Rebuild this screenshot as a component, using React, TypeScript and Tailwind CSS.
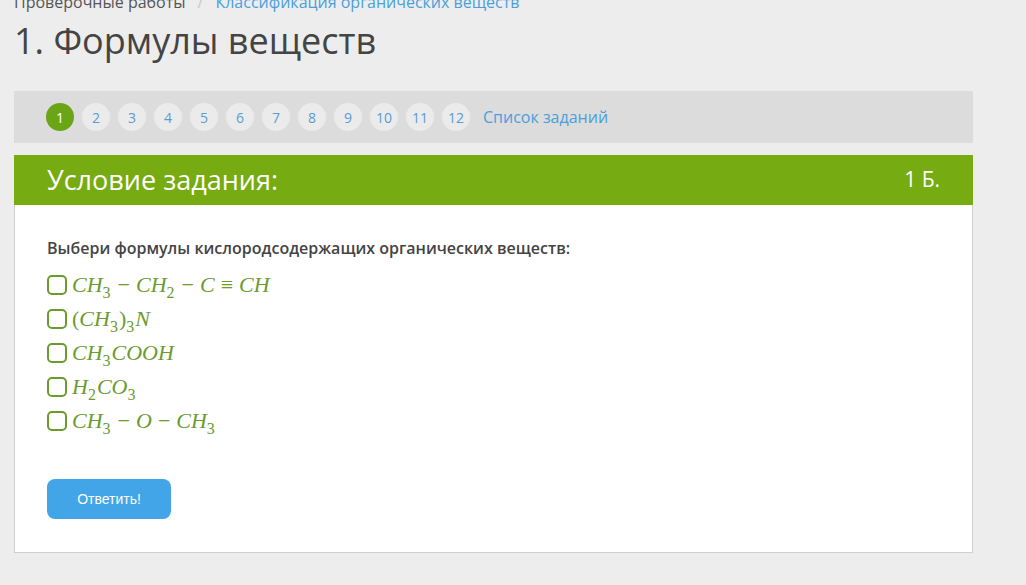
import React from "react";

const openSans = { fontFamily: '"Open Sans", "Noto Sans", sans-serif' };

function Sub({ children }: { children: React.ReactNode }) {
  return (
    <span className="not-italic text-[16px] relative top-[6px] leading-none mr-[1px]">
      {children}
    </span>
  );
}

function Op({ children }: { children: React.ReactNode }) {
  return <span className="not-italic mx-[6px]">{children}</span>;
}

const formulas: React.ReactNode[] = [
  <>
    CH<Sub>3</Sub>
    <Op>−</Op>CH<Sub>2</Sub>
    <Op>−</Op>C<Op>≡</Op>CH
  </>,
  <>
    <span className="not-italic">(</span>CH<Sub>3</Sub>
    <span className="not-italic">)</span>
    <Sub>3</Sub>N
  </>,
  <>
    CH<Sub>3</Sub>COOH
  </>,
  <>
    H<Sub>2</Sub>CO<Sub>3</Sub>
  </>,
  <>
    CH<Sub>3</Sub>
    <Op>−</Op>O<Op>−</Op>CH<Sub>3</Sub>
  </>,
];

export default function App() {
  const pages = [1, 2, 3, 4, 5, 6, 7, 8, 9, 10, 11, 12];

  return (
    <div className="min-h-[585px] bg-[#ededed] pl-[14px] overflow-hidden" style={openSans}>
      {/* Breadcrumb */}
      <div className="-mt-[9px] flex items-center text-[16px] leading-[22px] text-[#555]">
        <span>Проверочные работы</span>
        <span className="mx-[12px] text-[#c8c8c8]">/</span>
        <span className="text-[#4a9fdc]">Классификация органических веществ</span>
      </div>

      {/* Title */}
      <h1 className="mt-[6px] text-[36px] leading-[44px] text-[#444]">1. Формулы веществ</h1>

      <div className="w-[959px] mt-[28px]">
        {/* Task nav */}
        <div className="h-[52px] bg-[#dcdcdc] flex items-center pl-[32px] gap-[8px]">
          {pages.map((p) => (
            <div
              key={p}
              className={
                p === 1
                  ? "w-[28px] h-[28px] rounded-full bg-[#6aa516] text-white flex items-center justify-center text-[14px]"
                  : "w-[28px] h-[28px] rounded-full bg-[#ebebeb] text-[#5a9bd5] flex items-center justify-center text-[14px]"
              }
            >
              {p}
            </div>
          ))}
          <span className="ml-[5px] text-[16px] text-[#4a9fdc]">Список заданий</span>
        </div>

        {/* Task panel */}
        <div className="mt-[12px] border border-[#cfcfcf] bg-white">
          <div className="h-[50px] -m-px mb-0 bg-[#76ab12] flex items-center justify-between px-[33px] text-white">
            <span className="text-[27px]">Условие задания:</span>
            <span className="text-[21px]">1 Б.</span>
          </div>

          <div className="pl-[32px] pt-[32px] pb-[33px]">
            <p className="text-[16px] leading-[22px] font-semibold text-[#444]">
              Выбери формулы кислородсодержащих органических веществ:
            </p>

            <div className="mt-[14px] flex flex-col gap-[10px]">
              {formulas.map((f, i) => (
                <label key={i} className="flex items-center h-[24px]">
                  <span className="w-[20px] h-[20px] border-2 border-[#6b9b2f] rounded-[5px] shrink-0" />
                  <span
                    className="ml-[5px] italic text-[22px] leading-none text-[#6b9b2f] whitespace-nowrap"
                    style={{ fontFamily: '"Liberation Serif", "DejaVu Serif", serif' }}
                  >
                    {f}
                  </span>
                </label>
              ))}
            </div>

            <button
              className="mt-[46px] w-[124px] h-[40px] rounded-[8px] bg-[#42a5e8] text-white text-[14px]"
              style={{ fontFamily: '"Liberation Sans", Arial, sans-serif' }}
            >
              Ответить!
            </button>
          </div>
        </div>
      </div>
    </div>
  );
}
